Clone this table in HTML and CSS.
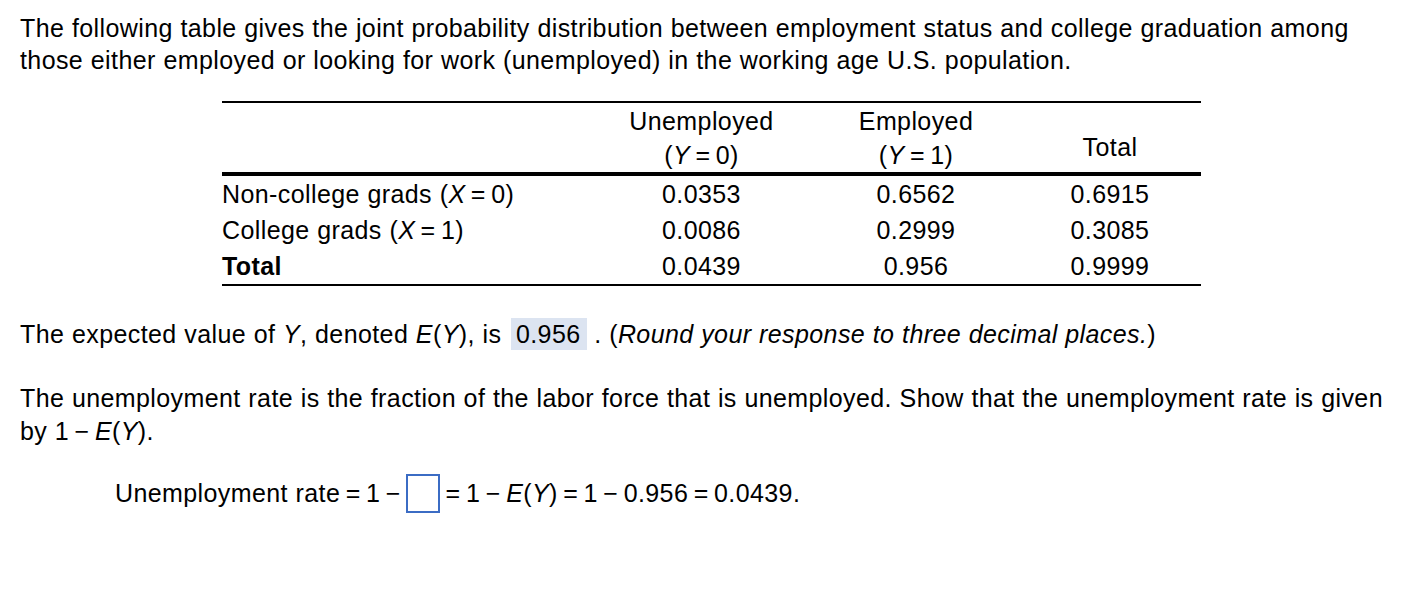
FILE: index.html
```html
<!DOCTYPE html>
<html>
<head>
<meta charset="utf-8">
<link rel="stylesheet" href="styles.css">
</head>
<body>
<div class="page">
  <p class="intro">The following table gives the joint probability distribution between employment status and college graduation among those either employed or looking for work (unemployed) in the working age U.S. population.</p>

  <table class="dist">
    <thead>
      <tr>
        <th class="label"></th>
        <th class="c1">Unemployed<br>(<i>Y</i>&#8201;=&#8201;0)</th>
        <th class="c2">Employed<br>(<i>Y</i>&#8201;=&#8201;1)</th>
        <th class="c3 total-head">Total</th>
      </tr>
    </thead>
    <tbody>
      <tr>
        <td class="label">Non-college grads (<i>X</i>&#8201;=&#8201;0)</td>
        <td>0.0353</td>
        <td>0.6562</td>
        <td class="c3">0.6915</td>
      </tr>
      <tr>
        <td class="label">College grads (<i>X</i>&#8201;=&#8201;1)</td>
        <td>0.0086</td>
        <td>0.2999</td>
        <td class="c3">0.3085</td>
      </tr>
      <tr>
        <td class="label"><b>Total</b></td>
        <td>0.0439</td>
        <td>0.956</td>
        <td class="c3">0.9999</td>
      </tr>
    </tbody>
  </table>

  <p class="expected">The expected value of <i>Y</i>, denoted <i>E</i>(<i>Y</i>), is <span class="answer">0.956</span> . (<i>Round your response to three decimal places.</i>)</p>

  <p class="para">The unemployment rate is the fraction of the labor force that is unemployed. Show that the unemployment rate is given by 1&#8201;&#8722;&#8201;<i>E</i>(<i>Y</i>).</p>

  <p class="equation">Unemployment rate&#8201;=&#8201;1&#8201;&#8722;&#8201;<span class="blank"></span>&#8201;=&#8201;1&#8201;&#8722;&#8201;<i>E</i>(<i>Y</i>)&#8201;=&#8201;1&#8201;&#8722;&#8201;0.956&#8201;=&#8201;0.0439.</p>
</div>
</body>
</html>
```

FILE: styles.css
```css
html, body {
  margin: 0;
  padding: 0;
  background: #ffffff;
}

body {
  font-family: "Liberation Sans", Arial, sans-serif;
  font-size: 25px;
  letter-spacing: 0.4px;
  word-spacing: 0.3px;
  color: #000000;
}

.page {
  padding: 12px 16px 0 20px;
  width: 1370px;
}

p {
  margin: 0;
}

.intro {
  line-height: 32px;
}

.dist {
  border-collapse: collapse;
  margin: 25px 0 0 202px;
  width: 979px;
  border-top: 2px solid #000;
  border-bottom: 2px solid #000;
}

.dist th {
  font-weight: normal;
  line-height: 34px;
  height: 69px;
  padding: 0;
  vertical-align: middle;
  text-align: center;
}

.dist thead tr {
  border-bottom: 4px solid #000;
}

.dist th.total-head {
  height: 61px;
  vertical-align: bottom;
  padding-bottom: 8px;
  padding-right: 12px;
}

.dist td {
  height: 36px;
  line-height: 36px;
  padding: 0;
  text-align: center;
}

.dist .label {
  text-align: left;
  width: 380px;
}

.dist .c1 {
  width: 199px;
}

.dist .c2 {
  width: 230px;
}

.dist .c3 {
  padding-right: 12px;
}

.expected {
  margin-top: 32px;
  line-height: 32px;
}

.answer {
  display: inline-block;
  background: #dce4f1;
  margin-left: 2px;
  padding: 0 6px 0 5px;
  line-height: 32px;
}

.para {
  margin-top: 32px;
  line-height: 33px;
}

.equation {
  margin: 26px 0 0 95px;
  line-height: 39px;
}

.blank {
  display: inline-block;
  width: 30px;
  height: 35px;
  border: 2px solid #3b6cc4;
  vertical-align: middle;
  margin-top: -4px;
}
```
